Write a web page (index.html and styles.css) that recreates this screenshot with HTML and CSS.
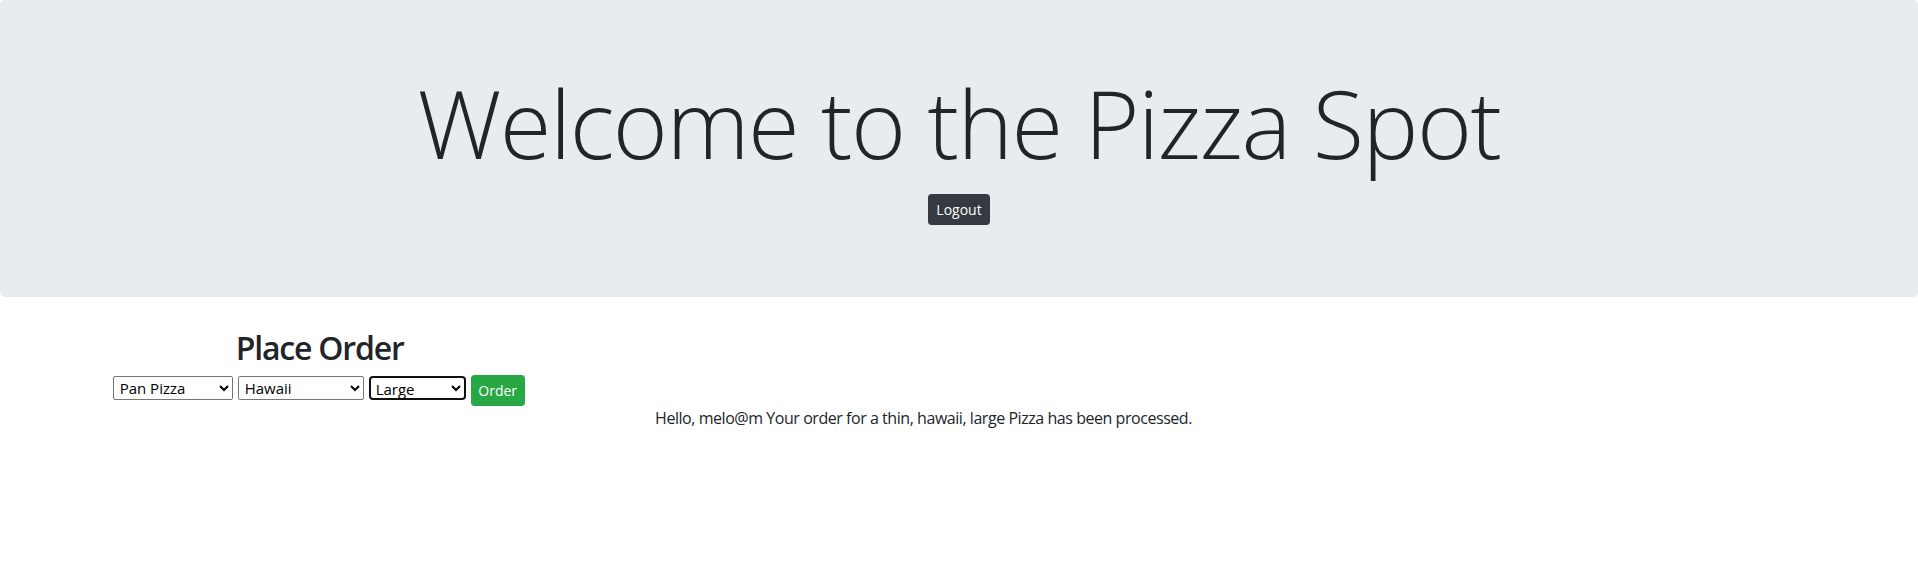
FILE: index.html
```html
<!DOCTYPE html>
<html lang="en">
<head>
<meta charset="utf-8">
<title>Pizza Spot</title>
<link rel="stylesheet" href="styles.css">
</head>
<body>
<div class="jumbotron">
  <h1 class="title">Welcome to the Pizza Spot</h1>
  <div class="actions"><button class="btn btn-dark" type="button">Logout</button></div>
</div>
<div class="row">
  <div class="col">
    <h2 class="subtitle">Place Order</h2>
    <form class="order-form">
      <select class="sel sel-crust">
        <option>Pan Pizza</option>
        <option>Thin Crust</option>
      </select>
      <select class="sel sel-topping">
        <option>Hawaii</option>
        <option>Margherita</option>
      </select>
      <select class="sel sel-size focused">
        <option>Large</option>
        <option>Small</option>
      </select>
      <button class="btn btn-success" type="button">Order</button>
    </form>
  </div>
</div>
<p class="message">Hello, melo@m Your order for a thin, hawaii, large Pizza has been processed.</p>
</body>
</html>
```
FILE: styles.css
```css
html, body {
  margin: 0;
  padding: 0;
  background: #fff;
}
body {
  font-family: "Open Sans", "Noto Sans", sans-serif;
  font-size: 16px;
  line-height: 1.5;
  color: #212529;
}
.jumbotron {
  background: #e9ecef;
  padding: 64px 32px;
  border-radius: 4.8px;
  margin-bottom: 32px;
  text-align: center;
}
.title {
  font-size: 94px;
  font-weight: 300;
  line-height: 115px;
  letter-spacing: -1.5px;
  padding-top: 2px;
  margin: 0 0 13px;
}
.actions {
  height: 31px;
  margin-bottom: 8px;
}
.btn {
  display: inline-block;
  box-sizing: border-box;
  height: 31px;
  font-family: "Open Sans", sans-serif;
  font-size: 14px;
  line-height: 21px;
  padding: 4px 8px;
  border: 1px solid transparent;
  border-radius: 3.2px;
  color: #fff;
  cursor: pointer;
}
.btn-dark {
  background: #343a40;
  border-color: #343a40;
  width: 62px;
  padding: 4px 0;
}
.btn-success {
  background: #28a745;
  border-color: #28a745;
  width: 54px;
  padding: 4px 0;
}
.row {
  display: flex;
}
.col {
  width: 33.3333%;
  box-sizing: border-box;
  padding: 0 15px;
  text-align: center;
}
.subtitle {
  font-size: 32px;
  font-weight: 600;
  line-height: 38.4px;
  letter-spacing: -1.2px;
  margin: 0 0 8px;
}
.order-form {
  display: flex;
  justify-content: center;
  align-items: flex-start;
  gap: 5px;
  margin-left: -2px;
}
.sel {
  box-sizing: border-box;
  height: 24px;
  margin-top: 1px;
  font-family: "Open Sans", sans-serif;
  font-size: 15px;
  color: #000;
  background: #fff;
  border: 1px solid #767676;
  border-radius: 2px;
  padding: 0 0 0 2px;
}
.sel-crust { width: 120px; }
.sel-topping { width: 126px; }
.sel-size { width: 97px; }
.sel.focused {
  border: 2px solid #101010;
  border-radius: 4px;
  padding-left: 1px;
}
.message {
  margin: 0;
  padding-right: 71px;
  text-align: center;
  letter-spacing: -0.45px;
  line-height: 24px;
}
```
